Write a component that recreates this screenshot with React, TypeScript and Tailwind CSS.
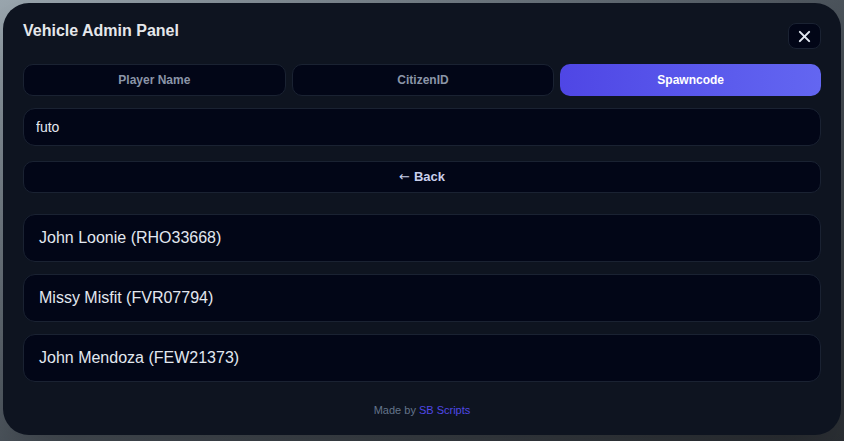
import React, { useState } from "react";

const tabs = ["Player Name", "CitizenID", "Spawncode"];

const results = [
  { name: "John Loonie", plate: "RHO33668" },
  { name: "Missy Misfit", plate: "FVR07794" },
  { name: "John Mendoza", plate: "FEW21373" },
];

export default function App() {
  const [tab, setTab] = useState("Spawncode");
  const [query, setQuery] = useState("futo");

  return (
    <div
      className="h-[441px] w-full flex items-start justify-center pt-[3px] bg-gradient-to-br from-[#9aa6ae] via-[#4b535b] to-[#2b2f34]"
      style={{ fontFamily: '"Liberation Sans", Arial, sans-serif' }}
    >
      <div className="w-[838px] bg-[#0e1420] rounded-[26px] px-5 pt-4 pb-[17px] shadow-2xl">
        {/* Header */}
        <div className="flex justify-between items-start mb-[15px]">
          <h2 className="text-base leading-6 font-bold text-[#e5e7eb]">
            Vehicle Admin Panel
          </h2>
          <button className="mt-1 w-[33px] h-[26px] rounded-lg bg-[#020617] border border-[#1a2232] flex items-center justify-center text-[#e2e8f0]">
            <svg width="13" height="13" viewBox="0 0 14 14" fill="none">
              <path
                d="M2 2L12 12M12 2L2 12"
                stroke="currentColor"
                strokeWidth="2.2"
                strokeLinecap="round"
              />
            </svg>
          </button>
        </div>

        {/* Tabs */}
        <div className="flex gap-[6px]">
          {tabs.map((t) =>
            t === tab ? (
              <button
                key={t}
                onClick={() => setTab(t)}
                className="flex-1 h-8 rounded-[10px] bg-gradient-to-r from-[#4f46e5] to-[#6366f1] text-white text-xs font-bold"
              >
                {t}
              </button>
            ) : (
              <button
                key={t}
                onClick={() => setTab(t)}
                className="flex-1 h-8 rounded-[10px] bg-[#020617] border border-[#1a2232] text-[#8b95a8] text-xs font-bold"
              >
                {t}
              </button>
            )
          )}
        </div>

        <input
          value={query}
          onChange={(e) => setQuery(e.target.value)}
          className="mt-3 w-full h-[38px] rounded-xl bg-[#020617] border border-[#1a2232] px-3 text-sm text-[#e2e8f0] outline-none"
        />

        <button className="mt-[15px] w-full h-8 rounded-[10px] bg-[#020617] border border-[#1a2232] text-[13px] font-bold text-[#c9d0ec] flex items-center justify-center gap-1">
          <span style={{ fontFamily: '"DejaVu Sans", sans-serif' }} className="font-normal text-[13px]">
            ←
          </span>
          Back
        </button>

        {/* Results */}
        <div className="mt-[21px] flex flex-col gap-3">
          {results.map((r) => (
            <div
              key={r.plate}
              className="h-12 rounded-xl bg-[#020617] border border-[#1a2232] px-[15px] flex items-center text-base text-[#e2e8f0]"
            >
              {r.name} ({r.plate})
            </div>
          ))}
        </div>

        <p className="mt-5 text-center text-[11px] leading-4 text-[#64748b]">
          Made by <span className="text-[#5048e5]">SB Scripts</span>
        </p>
      </div>
    </div>
  );
}
